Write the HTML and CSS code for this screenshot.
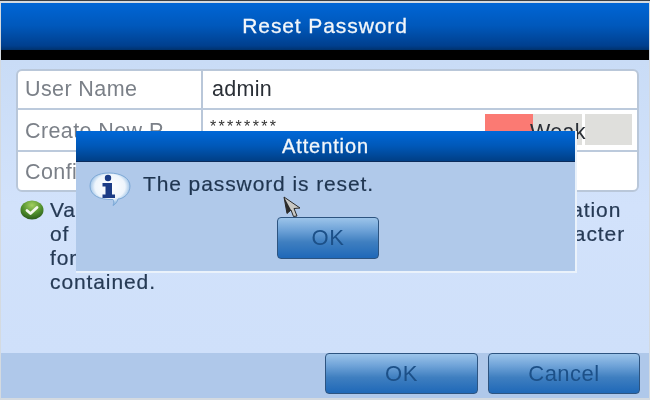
FILE: index.html
```html
<!DOCTYPE html>
<html lang="en">
<head>
<meta charset="utf-8">
<title>Reset Password</title>
<link rel="stylesheet" href="styles.css">
</head>
<body>
<div class="screen">
  <header class="header"><h1 class="header-title">Reset Password</h1></header>
  <main class="content">
    <div class="form">
      <div class="row row-a">
        <div class="label">User Name</div>
        <div class="value">admin</div>
      </div>
      <div class="row row-b">
        <div class="label">Create New P</div>
        <div class="value">
          <span class="stars">********</span>
          <div class="strength">
            <span class="seg seg-red"></span>
            <span class="seg seg-mid"></span>
            <span class="seg"></span>
            <span class="strength-text">Weak</span>
          </div>
        </div>
      </div>
      <div class="row row-c">
        <div class="label">Confirm</div>
        <div class="value"></div>
      </div>
    </div>
    <div class="hint">
      <svg class="check" viewBox="0 0 24 20" aria-hidden="true">
        <defs>
          <radialGradient id="cg" cx="50%" cy="25%" r="80%">
            <stop offset="0" stop-color="#a4d060"/>
            <stop offset="0.55" stop-color="#4f8f2c"/>
            <stop offset="1" stop-color="#26531a"/>
          </radialGradient>
        </defs>
        <ellipse cx="12" cy="10" rx="11.5" ry="9.5" fill="url(#cg)"/>
        <path d="M7 10.500l3.500 3 6.500-6" fill="none" stroke="#f4f8ee" stroke-width="2.800" stroke-linecap="round" stroke-linejoin="round"/>
      </svg>
      <p class="hint-text">Valid password range [8-16]. You can use a combination<br>of numbers, lowercase, uppercase and special character<br>for your password with at least two kinds of them<br>contained.</p>
    </div>
  </main>
  <footer class="footer">
    <button class="btn btn-main">OK</button>
    <button class="btn btn-cancel">Cancel</button>
  </footer>

  <div class="dialog">
    <div class="dialog-title">Attention</div>
    <div class="dialog-body">
      <svg class="info" viewBox="0 0 42 34" aria-hidden="true">
        <defs>
          <radialGradient id="ig" cx="50%" cy="42%" r="58%">
            <stop offset="0" stop-color="#ffffff"/>
            <stop offset="0.65" stop-color="#eef5fc"/>
            <stop offset="1" stop-color="#6fa5da"/>
          </radialGradient>
        </defs>
        <path d="M20 1C32 1 41 6 41 14S34 27 29 27C28 30 27 32 24 33.500C25 31 25 29 24 27.500C10 28 1 23 1 14S9 1 20 1Z" fill="url(#ig)" stroke="#7ea9d6" stroke-width="1"/>
        <circle cx="19" cy="6" r="3.200" fill="#1b3c86"/>
        <path d="M13.500 11H23V22.500H26V26H13.500V22.500H16.500V14.500H13.500Z" fill="#1b3c86"/>
      </svg>
      <p class="dialog-msg">The password is reset.</p>
    </div>
    <div class="dialog-actions"><button class="btn btn-dialog">OK</button></div>
  </div>

  <svg class="cursor" viewBox="0 0 18 22" aria-hidden="true">
    <path d="M1 1L17 12L11 12.500L14 20L10.500 20.500L8 14L4 17.500Z" fill="#c8c8c4" stroke="#2a2a2a" stroke-width="1" stroke-linejoin="round"/>
    <path d="M1 1L8 14L4 17.500Z" fill="#2a2a2a"/>
  </svg>
</div>
</body>
</html>
```
FILE: styles.css
```css
* { box-sizing: border-box; }
html, body { margin: 0; padding: 0; }
body {
  width: 650px;
  height: 400px;
  overflow: hidden;
  background: #c9d0d8;
  font-family: "Liberation Sans", Arial, sans-serif;
}
.screen {
  position: relative;
  width: 650px;
  height: 400px;
  padding: 2px 1px 2px 1px;
  display: flex;
  flex-direction: column;
  background: #d4dae0;
  border-top: 1px solid #3a3f44;
  filter: blur(0.5px);
}
.header {
  flex: none;
  height: 57px;
  background: linear-gradient(#0066d6 0, #0058bb 40%, #003f8e 75%, #00336f 82%, #000 83%, #000 100%);
  display: flex;
  justify-content: center;
  padding-top: 11px;
}
.header-title {
  margin: 0;
  font-size: 21px;
  font-weight: 400;
  letter-spacing: 0.9px;
  line-height: 24px;
  color: #f2f6fa;
  -webkit-text-stroke: 0.3px #f2f6fa;
}
.content {
  flex: 1;
  background: linear-gradient(#c9dcf6, #d2e2fb 50%, #cfe0fa);
  padding: 9px 10px 0 15px;
}
.form {
  background: #fff;
  border: 2px solid #b9c7d9;
  border-radius: 6px;
  height: 123px;
  display: flex;
  flex-direction: column;
}
.row {
  display: flex;
  border-bottom: 2px solid #bccadc;
}
.row-a { height: 39px; }
.row-b { height: 42px; }
.row-c { height: 38px; border-bottom: 0; }
.label {
  flex: none;
  width: 185px;
  padding: 6px 0 0 7px;
  border-right: 2px solid #b9c7d9;
  font-size: 21.5px;
  letter-spacing: 0.4px;
  line-height: 24px;
  color: #7b8088;
  white-space: nowrap;
}
.row-b .label { padding-top: 9px; }
.row-c .label { padding-top: 8px; }
.value {
  flex: 1;
  position: relative;
  padding: 6px 0 0 9px;
  font-size: 21.5px;
  letter-spacing: 0.3px;
  line-height: 24px;
  color: #2a2f36;
  display: flex;
  justify-content: space-between;
}
.stars { font-size: 16px; letter-spacing: 2.3px; line-height: 16px; margin: 3px 0 0 -2px; color: #333; }
.strength {
  position: absolute;
  right: 5px;
  top: 4px;
  display: flex;
  gap: 3px;
  height: 31px;
}
.seg { width: 47px; background: #dfdfdc; }
.seg-red { width: 48px; background: #fb7a73; }
.seg-mid { margin-left: -3px; width: 49px; }
.strength-text {
  position: absolute;
  left: 45px;
  top: 6px;
  font-size: 21.5px;
  color: #2a2f36;
}
.hint {
  display: flex;
  align-items: flex-start;
  gap: 6px;
  margin-top: 6px;
  padding-left: 4px;
}
.check { flex: none; width: 24px; height: 20px; margin-top: 2px; }
.hint-text {
  margin: 0;
  font-size: 21px;
  letter-spacing: 0.9px;
  line-height: 24px;
  color: #263a55;
  white-space: nowrap;
  -webkit-text-stroke: 0.2px #263a55;
}
.footer {
  flex: none;
  height: 45px;
  background: #afc8ea;
  display: flex;
  justify-content: flex-end;
  gap: 10px;
  padding: 0 9px 4px 0;
}
.btn {
  display: block;
  padding: 0;
  font-family: inherit;
  font-size: 22px;
  letter-spacing: 0.5px;
  color: #1c5088;
  border: 1px solid #2d5480;
  border-radius: 4px;
  background: linear-gradient(#9cc4ea 0, #6fa3d8 30%, #3f7fc0 60%, #1f68b8 100%);
}
.btn-main { width: 153px; }
.btn-cancel { width: 152px; }
.dialog {
  position: absolute;
  left: 76px;
  top: 130px;
  width: 501px;
  height: 142px;
  background: #b0c9ea;
  border-right: 2px solid #eaf2fb;
  border-bottom: 2px solid #eaf2fb;
  display: flex;
  flex-direction: column;
}
.dialog-title {
  flex: none;
  height: 31px;
  background: linear-gradient(#0068d8 0, #0058b8 50%, #003f86 100%);
  color: #f2f6fa;
  text-align: center;
  font-size: 20px;
  letter-spacing: 0.9px;
  line-height: 30px;
  border-bottom: 1px solid #0b2c5c;
  -webkit-text-stroke: 0.3px #f2f6fa;
}
.dialog-body {
  display: flex;
  align-items: flex-start;
  gap: 12px;
  padding: 10px 0 0 13px;
}
.info { flex: none; width: 42px; height: 34px; }
.dialog-msg {
  margin: 0;
  font-size: 21px;
  letter-spacing: 0.9px;
  line-height: 24px;
  color: #1f3550;
  -webkit-text-stroke: 0.2px #1f3550;
}
.dialog-actions {
  position: absolute;
  left: 201px;
  top: 86px;
}
.btn-dialog { width: 102px; height: 42px; }
.cursor {
  position: absolute;
  left: 283px;
  top: 195px;
  width: 18px;
  height: 22px;
}
```
